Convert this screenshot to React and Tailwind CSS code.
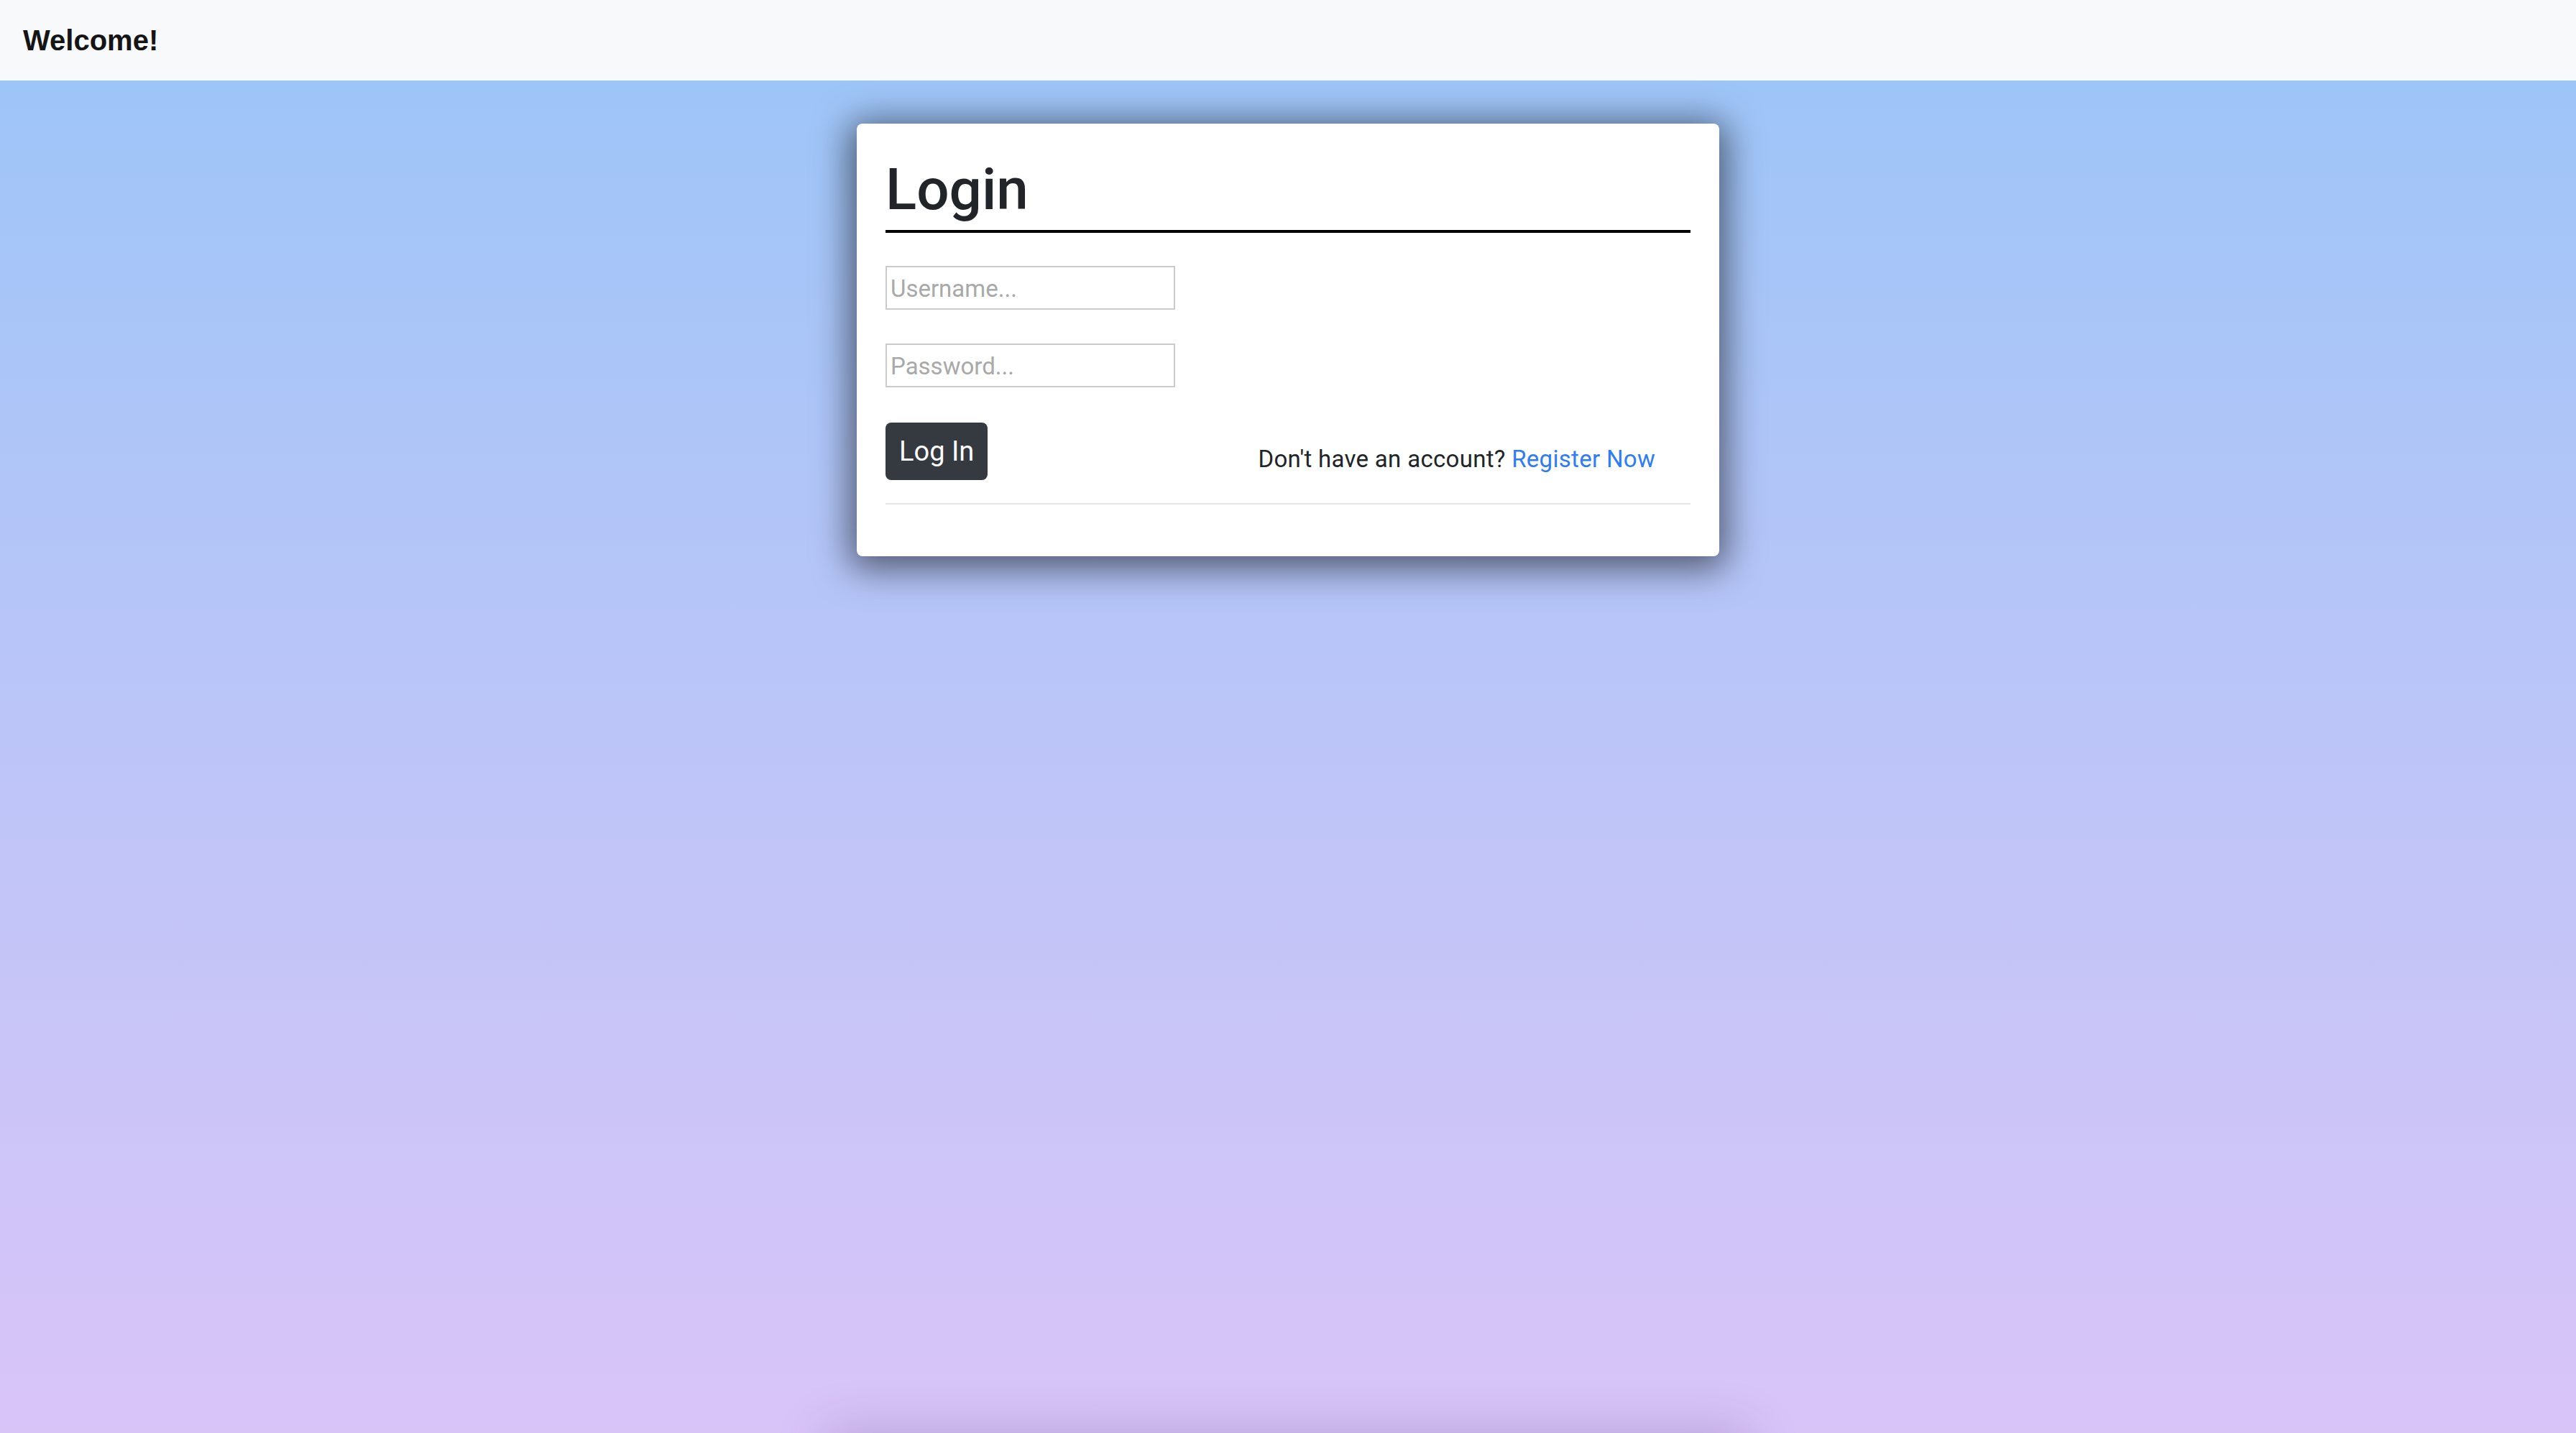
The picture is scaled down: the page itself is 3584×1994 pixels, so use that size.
import React, { useState } from 'react';

function App() {
  const [username, setUsername] = useState('');
  const [password, setPassword] = useState('');

  return (
    <div className="h-screen overflow-hidden flex flex-col font-['Roboto',sans-serif]">
      <nav className="h-[112px] shrink-0 bg-[#f8f9fa] flex items-center px-[32px]">
        <span className="font-['Liberation_Sans',Arial,sans-serif] font-bold text-[40px] text-[#151515]">
          Welcome!
        </span>
      </nav>

      <main className="flex-1 flex flex-col items-center bg-gradient-to-b from-[#9ec5f8] to-[#d9c4f8]">
        <div className="w-[1200px] shrink-0 mt-[60px] bg-white rounded-[8px] p-[40px] shadow-[0_8px_50px_10px_rgba(0,0,0,0.55)]">
          <h1 className="mt-[4px] pb-[8px] border-b-4 border-black text-[80px] leading-[96px] text-[#212529] font-medium">
            Login
          </h1>

          <div className="mt-[46px] flex flex-col gap-[47px]">
            <input
              type="text"
              value={username}
              onChange={(e) => setUsername(e.target.value)}
              placeholder="Username..."
              className="w-[403px] h-[61px] border-2 border-[#cbcbcb] px-[5px] pt-[2px] text-[33px] text-[#212529] placeholder:text-[#a9a9a9] outline-none"
            />
            <input
              type="password"
              value={password}
              onChange={(e) => setPassword(e.target.value)}
              placeholder="Password..."
              className="w-[403px] h-[61px] border-2 border-[#cbcbcb] px-[5px] pt-[2px] text-[33px] text-[#212529] placeholder:text-[#a9a9a9] outline-none"
            />
          </div>

          <div className="mt-[49px] flex items-start">
            <button className="h-[80px] px-[19px] bg-[#343a40] text-white text-[38px] rounded-[8px]">
              Log In
            </button>
            <p className="ml-auto mr-[49px] mt-[27px] text-[33px] tracking-[0.3px] leading-[48px] text-[#212529]">
              Don't have an account? <a href="#" className="text-[#2f7cf6]">Register Now</a>
            </p>
          </div>

          <hr className="mt-[32px] mb-[32px] border-0 border-t-2 border-[#e5e5e5]" />
        </div>

        <div className="flex-1" />
        <div className="w-[1240px] h-[60px] shrink-0 -mb-[80px] bg-[#cdb9e6] shadow-[0_0_70px_20px_rgba(80,50,120,0.25)]" />
      </main>
    </div>
  );
}

export default App;
